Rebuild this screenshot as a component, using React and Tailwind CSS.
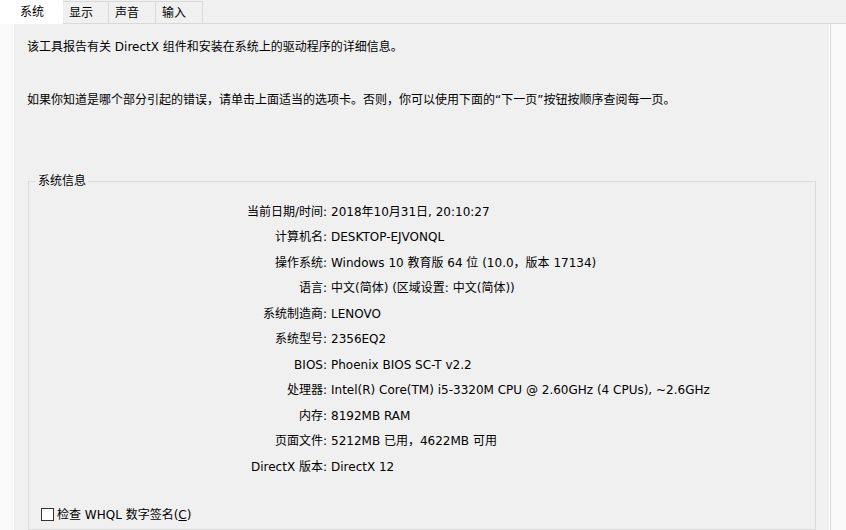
const rows = [
  ['当前日期/时间:', '2018年10月31日, 20:10:27'],
  ['计算机名:', 'DESKTOP-EJVONQL'],
  ['操作系统:', 'Windows 10 教育版 64 位 (10.0，版本 17134)'],
  ['语言:', '中文(简体) (区域设置: 中文(简体))'],
  ['系统制造商:', 'LENOVO'],
  ['系统型号:', '2356EQ2'],
  ['BIOS:', 'Phoenix BIOS SC-T v2.2'],
  ['处理器:', 'Intel(R) Core(TM) i5-3320M CPU @ 2.60GHz (4 CPUs), ~2.6GHz'],
  ['内存:', '8192MB RAM'],
  ['页面文件:', '5212MB 已用，4622MB 可用'],
  ['DirectX 版本:', 'DirectX 12'],
];

const tabs = ['系统', '显示', '声音', '输入'];

export default function App() {
  return (
    <div
      className="h-[530px] w-[846px] overflow-hidden bg-[#f0f0f0] text-[12px] text-black"
      style={{ fontFamily: '"DejaVu Sans", "Noto Sans CJK SC", sans-serif' }}
    >
      {/* tab strip */}
      <div className="flex h-[24px] items-end border-b border-[#d9d9d9]">
        {tabs.map((t, i) =>
          i === 0 ? (
            <div key={t} className="-mb-px flex h-[24px] w-[63px] items-center bg-white pl-[20px]">
              {t}
            </div>
          ) : (
            <div
              key={t}
              className="flex h-[22px] items-center border-t border-r border-[#d9d9d9] px-[6px]"
              style={{ width: i === 1 ? 46 : 47 }}
            >
              {t}
            </div>
          )
        )}
      </div>

      {/* tab body */}
      <div className="flex h-[506px] bg-[#f9f9f9]">
        <div className="ml-[13px] flex w-[817px] flex-col border-l border-r border-white bg-[#f0f0f0] shadow-[1px_0_0_#d9d9d9]">
          <div className="ml-[13px] mt-[15px] leading-[16px]">
            该工具报告有关 DirectX 组件和安装在系统上的驱动程序的详细信息。
          </div>
          <div className="ml-[13px] mt-[37px] leading-[16px]">
            如果你知道是哪个部分引起的错误，请单击上面适当的选项卡。否则，你可以使用下面的“下一页”按钮按顺序查阅每一页。
          </div>

          {/* group box */}
          <div className="relative ml-[14px] mt-[73px] h-[400px] w-[788px] border border-[#dcdcdc]">
            <div className="absolute left-[7px] top-[-9px] bg-[#f0f0f0] px-[2px] leading-[16px]">
              系统信息
            </div>
            <div className="mt-[17px] flex flex-col">
              {rows.map(([label, value]) => (
                <div key={label} className="flex h-[25.5px] items-center">
                  <div className="w-[298px] text-right">{label}</div>
                  <div className="ml-[4px] whitespace-nowrap">{value}</div>
                </div>
              ))}
            </div>
            <div className="ml-[12px] mt-[26px] flex items-center">
              <div className="h-[13px] w-[13px] border border-[#333] bg-white" />
              <span className="ml-[3px]">
                检查 WHQL 数字签名(<span className="underline">C</span>)
              </span>
            </div>
          </div>
        </div>
      </div>
    </div>
  );
}
